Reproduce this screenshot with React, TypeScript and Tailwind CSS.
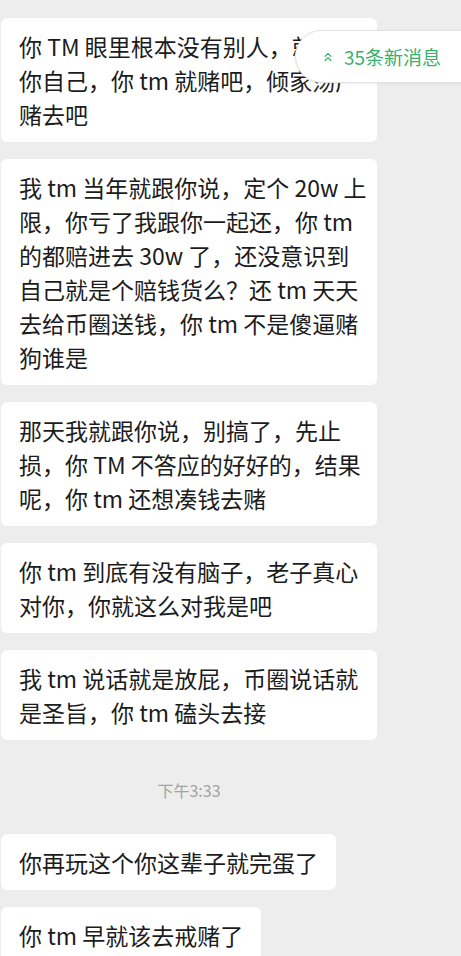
import { ChevronsUp } from 'lucide-react'

const FONT = '"Noto Sans CJK SC", "Noto Sans", sans-serif'

const BEFORE = [
  ['你 TM 眼里根本没有别人，就是', '你自己，你 tm 就赌吧，倾家荡产', '赌去吧'],
  [
    '我 tm 当年就跟你说，定个 20w 上',
    '限，你亏了我跟你一起还，你 tm',
    '的都赔进去 30w 了，还没意识到',
    '自己就是个赔钱货么？还 tm 天天',
    '去给币圈送钱，你 tm 不是傻逼赌',
    '狗谁是',
  ],
  ['那天我就跟你说，别搞了，先止', '损，你 TM 不答应的好好的，结果', '呢，你 tm 还想凑钱去赌'],
  ['你 tm 到底有没有脑子，老子真心', '对你，你就这么对我是吧'],
  ['我 tm 说话就是放屁，币圈说话就', '是圣旨，你 tm 磕头去接'],
]

const AFTER = [['你再玩这个你这辈子就完蛋了'], ['你 tm 早就该去戒赌了']]

function Bubble({ lines }: { lines: string[] }) {
  // wrapped messages fill the full bubble width, single lines shrink to fit
  const width = lines.length > 1 ? 'w-[376px]' : 'w-fit max-w-[376px]'
  return (
    <div className={`${width} bg-white rounded-md px-[18px] py-[11px] text-[23px] leading-[34px] text-[#1c1c1c]`}>
      {lines.map((l, i) => (
        <div key={i} className="whitespace-pre">
          {l}
        </div>
      ))}
    </div>
  )
}

export default function App() {
  return (
    <div className="relative h-[956px] w-[461px] overflow-hidden bg-[#ededed]" style={{ fontFamily: FONT }}>
      <div className="w-[377px] pt-[18px] pl-px flex flex-col gap-[17px]">
        {BEFORE.map((b, i) => (
          <Bubble key={i} lines={b} />
        ))}

        {/* time divider */}
        <div className="text-center text-[16px] leading-[20px] text-[#a3a3a3] pt-[23px] pb-[17px]">下午3:33</div>

        {AFTER.map((b, i) => (
          <Bubble key={i} lines={b} />
        ))}
      </div>

      {/* unread pill */}
      <div className="absolute top-[30px] left-[295px] -right-8 h-[53px] rounded-l-full bg-white border border-[#e2e2e2] shadow-[0_1px_4px_rgba(0,0,0,0.06)] flex items-center pl-[25px] gap-[9px] text-[#38b06c]">
        <ChevronsUp size={14} strokeWidth={2.2} />
        <span className="text-[19px] leading-none">35条新消息</span>
      </div>
    </div>
  )
}
